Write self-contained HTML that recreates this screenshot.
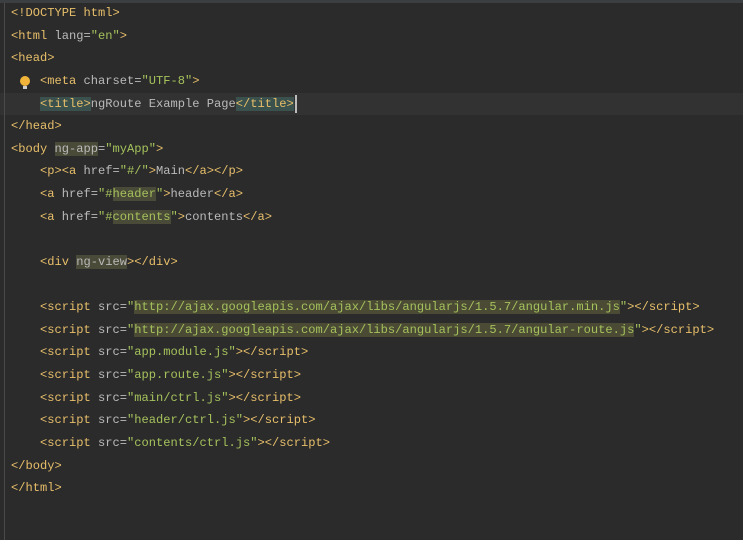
<!DOCTYPE html>
<html><head><style>
body{margin:0;width:743px;height:540px;background:#2b2b2b;overflow:hidden;position:relative}
.top{position:absolute;left:0;top:0;width:743px;height:3px;background:#3c3f41}
.gut{position:absolute;left:4px;top:3px;width:1px;height:537px;background:#4a4a4a}
pre{position:absolute;left:11px;top:2px;margin:0;font-family:"Liberation Mono",monospace;font-size:12.08px;line-height:22.62px;color:#bababa}
.t{color:#e8bf6a}.s{color:#a5c25c}
.h{background:#3b514d}.u{background:#4a4a35}.n{background:#4a4a38}
.cur{position:absolute;left:295px;top:95px;width:2px;height:18px;background:#bbb}
.cl{position:absolute;left:0;top:93px;width:743px;height:22px;background:#323232}
.bulb{position:absolute;left:20px;top:76px;width:10px;height:10px;border-radius:50%;background:#f0b43a}
.bulb:after{content:"";position:absolute;left:3px;top:10px;width:4px;height:3px;background:#ccc}
</style></head><body>
<div class="top"></div><div class="cl"></div><div class="gut"></div>
<div class="bulb"></div>
<pre><span class="t">&lt;!DOCTYPE html&gt;</span>
<span class="t">&lt;html </span>lang=<span class="s">"en"</span><span class="t">&gt;</span>
<span class="t">&lt;head&gt;</span>
    <span class="t">&lt;meta </span>charset=<span class="s">"UTF-8"</span><span class="t">&gt;</span>
    <span class="t h">&lt;title&gt;</span>ngRoute Example Page<span class="t h">&lt;/title&gt;</span>
<span class="t">&lt;/head&gt;</span>
<span class="t">&lt;body </span><span class="n">ng-app</span>=<span class="s">"myApp"</span><span class="t">&gt;</span>
    <span class="t">&lt;p&gt;&lt;a </span>href=<span class="s">"#/"</span><span class="t">&gt;</span>Main<span class="t">&lt;/a&gt;&lt;/p&gt;</span>
    <span class="t">&lt;a </span>href=<span class="s">"#<span class="n">header</span>"</span><span class="t">&gt;</span>header<span class="t">&lt;/a&gt;</span>
    <span class="t">&lt;a </span>href=<span class="s">"#<span class="n">contents</span>"</span><span class="t">&gt;</span>contents<span class="t">&lt;/a&gt;</span>

    <span class="t">&lt;div </span><span class="n">ng-view</span><span class="t">&gt;&lt;/div&gt;</span>

    <span class="t">&lt;script </span>src=<span class="s">"<span class="u">http://ajax.googleapis.com/ajax/libs/angularjs/1.5.7/angular.min.js</span>"</span><span class="t">&gt;&lt;/script&gt;</span>
    <span class="t">&lt;script </span>src=<span class="s">"<span class="u">http://ajax.googleapis.com/ajax/libs/angularjs/1.5.7/angular-route.js</span>"</span><span class="t">&gt;&lt;/script&gt;</span>
    <span class="t">&lt;script </span>src=<span class="s">"app.module.js"</span><span class="t">&gt;&lt;/script&gt;</span>
    <span class="t">&lt;script </span>src=<span class="s">"app.route.js"</span><span class="t">&gt;&lt;/script&gt;</span>
    <span class="t">&lt;script </span>src=<span class="s">"main/ctrl.js"</span><span class="t">&gt;&lt;/script&gt;</span>
    <span class="t">&lt;script </span>src=<span class="s">"header/ctrl.js"</span><span class="t">&gt;&lt;/script&gt;</span>
    <span class="t">&lt;script </span>src=<span class="s">"contents/ctrl.js"</span><span class="t">&gt;&lt;/script&gt;</span>
<span class="t">&lt;/body&gt;</span>
<span class="t">&lt;/html&gt;</span></pre>
<div class="cur"></div>
</body></html>
